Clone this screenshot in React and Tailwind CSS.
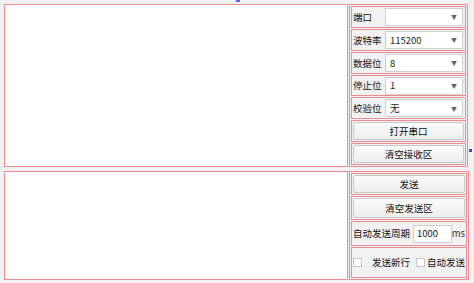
import React from 'react';

// Qt designer style outline colour
const line = 'border border-[#ec8c90]';

const Combo = ({ value }) => (
  <div className="flex-1 h-[18px] bg-white border border-[#cfcfcf] flex items-center justify-between pl-[4px] pr-[5px]">
    <span className="text-[9.5px] text-[#222]">{value}</span>
    <span className="text-[6px] text-[#666]">▼</span>
  </div>
);

const FieldRow = ({ label, value }) => (
  <div className={`${line} h-[22px] flex items-center pl-[1px] pr-[2px]`}>
    <span className="w-[32px] text-[9.5px] text-[#111] whitespace-nowrap">{label}</span>
    <Combo value={value} />
  </div>
);

const Btn = ({ children, h = 'h-[22px]' }) => (
  <div className={`${line} ${h} p-[1px]`}>
    <div className="h-full bg-gradient-to-b from-[#fcfcfc] to-[#ededed] border border-[#c8c8c8] rounded-[2px] flex items-center justify-center text-[9.5px] text-[#111]">
      {children}
    </div>
  </div>
);

const App = () => (
  <div
    className="relative w-[474px] h-[283px] bg-[#f2f2f2] pl-[4px] pt-[4px] pb-[3px] flex flex-col gap-[4px] overflow-hidden"
    style={{ fontFamily: '"Noto Sans CJK SC", "Noto Sans", sans-serif' }}
  >
    {/* top section */}
    <div className="flex h-[163px] gap-[1px]">
      <div className={`${line} w-[344px] bg-white`} />
      <div className={`${line} w-[119px] flex flex-col gap-[1px] p-[1px]`}>
        <FieldRow label="端口" value="" />
        <FieldRow label="波特率" value="115200" />
        <FieldRow label="数据位" value="8" />
        <FieldRow label="停止位" value="1" />
        <FieldRow label="校验位" value="无" />
        <Btn>打开串口</Btn>
        <Btn>清空接收区</Btn>
      </div>
    </div>

    {/* bottom section */}
    <div className="flex flex-1 gap-[1px]">
      <div className={`${line} w-[344px] bg-white`} />
      <div className={`${line} w-[120px] flex flex-col gap-[1px] p-[1px]`}>
        <Btn>发送</Btn>
        <Btn h="h-[24px]">清空发送区</Btn>
        <div className={`${line} h-[25px] flex items-center pl-[1px] pr-[1px]`}>
          <span className="text-[9.5px] text-[#111] whitespace-nowrap">自动发送周期</span>
          <div className="ml-[3px] w-[40px] h-[18px] bg-white border border-[#cfcfcf] flex items-center pl-[3px] text-[9.5px] text-[#111]">1000</div>
          <span className="ml-auto text-[9.5px] text-[#333]">ms</span>
        </div>
        <div className={`${line} flex-1 flex items-center pl-[1px] pr-[1px] whitespace-nowrap`}>
          <span className="w-[9px] h-[9px] bg-white border border-[#c8c8c8]" />
          <span className="ml-[10px] text-[9.5px] text-[#111]">发送新行</span>
          <span className="ml-[6px] w-[9px] h-[9px] bg-white border border-[#c8c8c8]" />
          <span className="ml-[2px] text-[9.5px] text-[#111]">自动发送</span>
        </div>
      </div>
    </div>

    {/* designer selection markers */}
    <span className="absolute left-[236px] top-0 w-[4px] h-[2px] bg-[#5a6ad8]" />
    <span className="absolute left-[469px] top-[149px] w-[3px] h-[3px] bg-[#3a4ac8]" />
  </div>
);

export default App;
